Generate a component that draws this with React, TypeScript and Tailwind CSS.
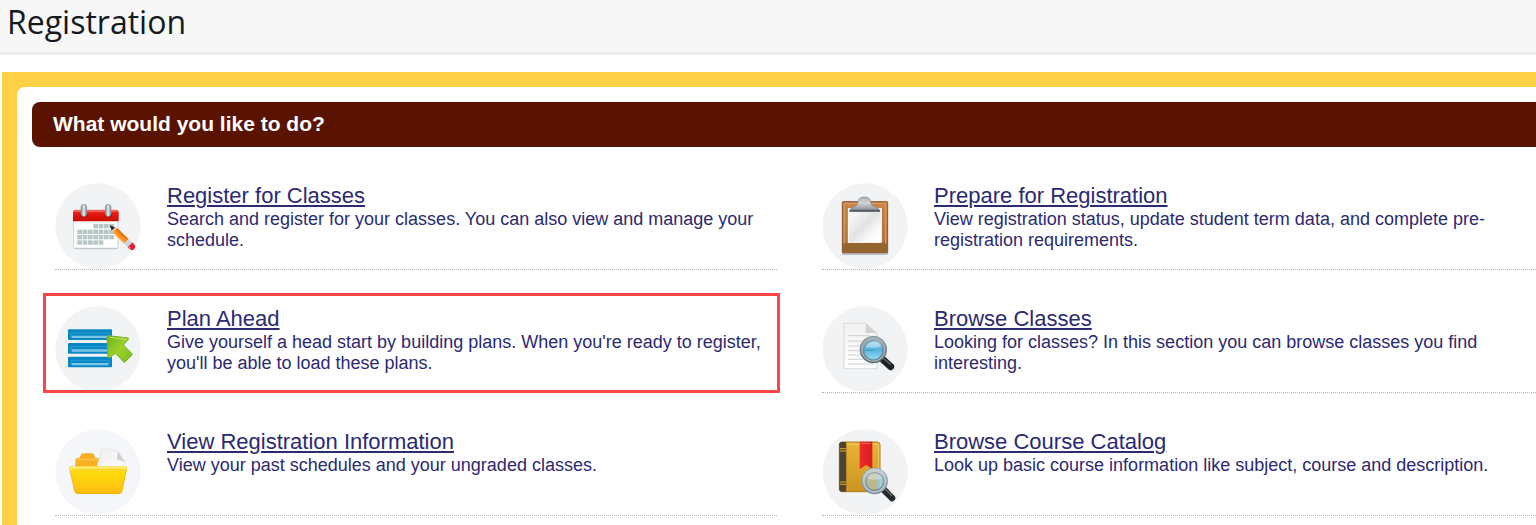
import type { ReactNode } from 'react';

function Badge({ fill = '#f2f3f5', children }: { fill?: string; children: ReactNode }) {
  return (
    <svg viewBox="30 24 258 258" className="size-[86px] shrink-0" aria-hidden="true">
      <circle cx="159" cy="153" r="128" fill={fill} />
      {children}
    </svg>
  );
}

const calendarCells = [
  { y: 147, from: 3, to: 6 },
  { y: 164, from: 0, to: 6 },
  { y: 180, from: 0, to: 6 },
  { y: 196, from: 0, to: 4 },
];

function CalendarIcon() {
  return (
    <Badge>
      <defs>
        <linearGradient id="cal-red" x1="0" y1="0" x2="0" y2="1">
          <stop offset="0" stopColor="#f0605a" />
          <stop offset="0.3" stopColor="#e8190f" />
          <stop offset="1" stopColor="#c90d06" />
        </linearGradient>
        <linearGradient id="cal-ring" x1="0" y1="0" x2="1" y2="0">
          <stop offset="0" stopColor="#71858e" />
          <stop offset="0.5" stopColor="#e6eef1" />
          <stop offset="1" stopColor="#71858e" />
        </linearGradient>
        <linearGradient id="cal-pencil" x1="0" y1="0" x2="1" y2="0">
          <stop offset="0" stopColor="#ffb04e" />
          <stop offset="0.5" stopColor="#fb8c1d" />
          <stop offset="1" stopColor="#df6b08" />
        </linearGradient>
      </defs>
      <rect x="86" y="108" width="133" height="114" rx="7" fill="#fdfefe" stroke="#cfd6da" strokeWidth="3" />
      <path d="M88 220h129" stroke="#bac4c8" strokeWidth="3" />
      <path d="M84 139v-27q0-8 8-8h121q8 0 8 8v27z" fill="url(#cal-red)" />
      <path d="M90 108h125" stroke="#f47b74" strokeWidth="3" />
      {[108, 181].map((x) => (
        <g key={x}>
          <ellipse cx={x + 9} cy="121" rx="11" ry="6" fill="#8d1512" />
          <rect x={x} y="88" width="17" height="36" rx="8" fill="url(#cal-ring)" stroke="#8b9ba2" strokeWidth="2" />
        </g>
      ))}
      {calendarCells.map((row) =>
        Array.from({ length: row.to - row.from + 1 }, (_, i) => (
          <rect key={`${row.y}-${i}`} x={97 + (row.from + i) * 16} y={row.y} width="14" height="13" fill="#b6c5c5" />
        )),
      )}
      <g transform="translate(194 151) rotate(-46) scale(1.1)">
        <path d="M0 0l-9 22h18z" fill="#f0c69a" />
        <path d="M0 0l-6 14h12z" fill="#20262a" />
        <path d="M-9 21q4-4 9 0q5-4 9 0v42h-18z" fill="url(#cal-pencil)" />
        <path d="M-9 63h18v15h-18z" fill="#cbd5dc" />
        <path d="M-9 77h18v7q0 9-9 9t-9-9z" fill="#df2035" />
        <path d="M-6 79v6" stroke="#f57d86" strokeWidth="4" />
      </g>
    </Badge>
  );
}

function ClipboardIcon() {
  return (
    <Badge>
      <defs>
        <linearGradient id="clip-wood" x1="0" y1="0" x2="0" y2="1">
          <stop offset="0" stopColor="#c98446" />
          <stop offset="0.8" stopColor="#b8743a" />
          <stop offset="0.82" stopColor="#96652f" />
          <stop offset="1" stopColor="#a66e3b" />
        </linearGradient>
        <linearGradient id="clip-paper" x1="0" y1="0" x2="1" y2="1">
          <stop offset="0" stopColor="#ffffff" />
          <stop offset="0.5" stopColor="#e2e3e5" />
          <stop offset="0.75" stopColor="#fafafa" />
          <stop offset="1" stopColor="#ffffff" />
        </linearGradient>
        <linearGradient id="clip-metal" x1="0" y1="0" x2="0" y2="1">
          <stop offset="0" stopColor="#a4a7ac" />
          <stop offset="0.4" stopColor="#d2d5d9" />
          <stop offset="0.8" stopColor="#9da2a9" />
          <stop offset="1" stopColor="#565c66" />
        </linearGradient>
      </defs>
      <rect x="90" y="228" width="138" height="11" rx="3" fill="#85888b" opacity="0.65" />
      <rect x="91" y="80" width="136" height="152" rx="2" fill="url(#clip-wood)" stroke="#8d552b" strokeWidth="3" />
      <path d="M97 226V86h124v140" fill="none" stroke="#d99d68" strokeWidth="3" />
      <path d="M93 206h132v24H93z" fill="#94652f" />
      <rect x="107" y="99" width="104" height="106" fill="#9a673c" />
      <rect x="109" y="101" width="99" height="101" fill="url(#clip-paper)" stroke="#fff" strokeWidth="3" />
      <path
        d="M113 109q0-9 10-12q14-3 15-16q1-15 19-15t19 15q1 13 16 16q11 3 11 12z"
        fill="url(#clip-metal)"
        stroke="#8c9097"
        strokeWidth="2"
      />
      <path d="M113 108h91" stroke="#4c525b" strokeWidth="4" />
      <ellipse cx="157" cy="76" rx="11" ry="5" fill="#c4c6c9" />
    </Badge>
  );
}

function PlanIcon() {
  return (
    <Badge>
      <defs>
        <linearGradient id="plan-green" x1="0" y1="0" x2="1" y2="1">
          <stop offset="0" stopColor="#6fae17" />
          <stop offset="0.5" stopColor="#9bd32c" />
          <stop offset="1" stopColor="#79b81b" />
        </linearGradient>
      </defs>
      {[94, 135, 176].map((y) => (
        <g key={y}>
          <rect x="69" y={y} width="132" height="32" rx="3" fill="#0787c4" />
          <path d={`M78 ${y + 24}v-13h115v13`} fill="none" stroke="#2a9dd2" strokeWidth="3" />
          <rect x="80" y={y + 19} width="110" height="7" rx="1" fill="#7cc6e6" />
        </g>
      ))}
      <path
        d="M190 113l59 7q4 1 1 4l-13 15q-2 2 1 5l22 22q3 3 0 6l-19 19q-3 3-6 0l-21-23q-3-3-6 0l-13 10q-5 4-6-2l-3-57q0-6 4-6z"
        fill="url(#plan-green)"
        stroke="#76b023"
        strokeWidth="3"
        strokeLinejoin="round"
      />
      <path d="M193 118l51 6" stroke="#bce368" strokeWidth="3" fill="none" />
    </Badge>
  );
}

function PageSearchIcon() {
  return (
    <Badge>
      <defs>
        <linearGradient id="page-fill" x1="0" y1="0" x2="0" y2="1">
          <stop offset="0" stopColor="#f1f1f1" />
          <stop offset="1" stopColor="#ffffff" />
        </linearGradient>
        <linearGradient id="page-ring" x1="0" y1="0" x2="0" y2="1">
          <stop offset="0" stopColor="#aab7bb" />
          <stop offset="1" stopColor="#536872" />
        </linearGradient>
        <linearGradient id="page-glass" x1="0" y1="0" x2="0" y2="1">
          <stop offset="0" stopColor="#a6d8ec" />
          <stop offset="0.45" stopColor="#55b3db" />
          <stop offset="1" stopColor="#94dcf3" />
        </linearGradient>
      </defs>
      <path d="M96 76h65l34 33v103H96z" fill="url(#page-fill)" stroke="#dddedf" strokeWidth="4" strokeLinejoin="round" />
      <path d="M161 76v29h33z" fill="#d0d1d2" />
      {[113, 129, 144, 158, 171, 184, 198].map((y) => (
        <path key={y} d={`M108 ${y}h${y === 198 ? 76 : 64}`} stroke="#cfd0d1" strokeWidth="3" />
      ))}
      <path d="M211 183l25 23" stroke="#1f2224" strokeWidth="21" strokeLinecap="round" />
      <path d="M214 181l21 18" stroke="#62686b" strokeWidth="4" strokeLinecap="round" />
      <circle cx="184" cy="155" r="40" fill="url(#page-ring)" stroke="#596c74" strokeWidth="2" />
      <circle cx="184" cy="155" r="34" fill="none" stroke="#a1b2b9" strokeWidth="4" />
      <circle cx="184" cy="157" r="28" fill="url(#page-glass)" stroke="#5590a8" strokeWidth="2" />
      <path d="M160 157h25" stroke="#3799c5" strokeWidth="3" />
      <path d="M162 148q8-19 28-18q15 2 19 15q-18 7-47 3z" fill="#d6eef6" opacity="0.45" />
    </Badge>
  );
}

function FolderIcon() {
  return (
    <Badge fill="#f4f6f9">
      <defs>
        <linearGradient id="folder-front" x1="0" y1="0" x2="0" y2="1">
          <stop offset="0" stopColor="#ffd43b" />
          <stop offset="0.25" stopColor="#ffda0b" />
          <stop offset="1" stopColor="#fdbd13" />
        </linearGradient>
        <linearGradient id="folder-paper" x1="0" y1="0" x2="1" y2="1">
          <stop offset="0" stopColor="#eeeeef" />
          <stop offset="1" stopColor="#fafafa" />
        </linearGradient>
      </defs>
      <path d="M91 140v-22q0-7 7-7h5l6-11q1-3 6-3h26q5 0 6 4l3 10h15v29z" fill="#f8b01f" />
      <path d="M94 116h66" stroke="#fac351" strokeWidth="4" />
      <path d="M156 137l14-52q2-6 8-5l40 11l22 29l-4 17z" fill="url(#folder-paper)" stroke="#dedfe0" strokeWidth="2" />
      <path d="M219 91l-4 24l24 8z" fill="#ced0d1" />
      <path
        d="M77 136h163q8 0 6 8l-14 67q-2 8-9 8H97q-7 0-9-8l-15-67q-2-8 4-8z"
        fill="url(#folder-front)"
      />
      <path d="M77 147q-1-7 6-7h152q8 0 6 7" fill="none" stroke="#ffed7c" strokeWidth="5" />
      <path d="M75 145l15 66q2 6 7 6h126q5 0 7-6l14-66" fill="none" stroke="#efab17" strokeWidth="2" />
    </Badge>
  );
}

function BookSearchIcon() {
  return (
    <Badge>
      <defs>
        <linearGradient id="book-cover" x1="0" y1="0" x2="0" y2="1">
          <stop offset="0" stopColor="#e7b634" />
          <stop offset="1" stopColor="#cc9420" />
        </linearGradient>
        <linearGradient id="book-ribbon" x1="0" y1="0" x2="1" y2="0">
          <stop offset="0" stopColor="#f02a28" />
          <stop offset="1" stopColor="#d91b20" />
        </linearGradient>
        <linearGradient id="book-ring" x1="0" y1="0" x2="0" y2="1">
          <stop offset="0" stopColor="#d4dadd" />
          <stop offset="1" stopColor="#71858d" />
        </linearGradient>
        <linearGradient id="book-glass" x1="0" y1="0" x2="1" y2="0">
          <stop offset="0" stopColor="#bab78f" />
          <stop offset="0.6" stopColor="#beb98a" />
          <stop offset="0.65" stopColor="#8ec2d4" />
          <stop offset="1" stopColor="#b9d6df" />
        </linearGradient>
      </defs>
      <rect x="82" y="63" width="122" height="149" rx="8" fill="url(#book-cover)" stroke="#ad7d1d" strokeWidth="3" />
      <path d="M103 70h94q3 0 3 5v102" fill="none" stroke="#f2ce61" strokeWidth="3" />
      <path d="M102 63v149H89q-7 0-7-7V70q0-7 7-7z" fill="#4c4430" />
      <path d="M84 83h18M84 90h18M84 183h18M84 190h18" stroke="#d9aa37" strokeWidth="3" />
      <path d="M103 64v147" stroke="#9d721b" strokeWidth="2" />
      <path d="M143 62h38v82l-18-12l-20 12z" fill="url(#book-ribbon)" />
      <path d="M147 68h29" stroke="#f36a63" strokeWidth="3" />
      <path d="M215 206l25 25" stroke="#26292b" strokeWidth="20" strokeLinecap="round" />
      <path d="M219 204l20 19" stroke="#686d70" strokeWidth="4" strokeLinecap="round" />
      <circle cx="188" cy="180" r="39" fill="url(#book-ring)" stroke="#81949d" strokeWidth="2" />
      <circle cx="188" cy="180" r="33" fill="none" stroke="#bdcbd1" strokeWidth="4" />
      <circle cx="188" cy="181" r="26" fill="url(#book-glass)" stroke="#7b949c" strokeWidth="3" />
      <path d="M165 173q6-16 22-16t24 16q-20 6-46 0z" fill="#e8f2f3" opacity="0.45" />
    </Badge>
  );
}

type Item = { title: string; text: string; icon: ReactNode; highlighted?: boolean };

const items: Item[] = [
  {
    title: 'Register for Classes',
    text: 'Search and register for your classes. You can also view and manage your schedule.',
    icon: <CalendarIcon />,
  },
  {
    title: 'Prepare for Registration',
    text: 'View registration status, update student term data, and complete pre-registration requirements.',
    icon: <ClipboardIcon />,
  },
  {
    title: 'Plan Ahead',
    text: "Give yourself a head start by building plans. When you're ready to register, you'll be able to load these plans.",
    icon: <PlanIcon />,
    highlighted: true,
  },
  {
    title: 'Browse Classes',
    text: 'Looking for classes? In this section you can browse classes you find interesting.',
    icon: <PageSearchIcon />,
  },
  {
    title: 'View Registration Information',
    text: 'View your past schedules and your ungraded classes.',
    icon: <FolderIcon />,
  },
  {
    title: 'Browse Course Catalog',
    text: 'Look up basic course information like subject, course and description.',
    icon: <BookSearchIcon />,
  },
];

export default function App() {
  return (
    <div className="min-h-screen overflow-hidden bg-white font-['Liberation_Sans',Arial,sans-serif]">
      <header className="border-b-3 border-[#ededed] bg-[#f7f7f7] px-[7px] pb-2">
        <h1 className="font-['Open_Sans',sans-serif] text-[32px] leading-[44px] font-medium text-[#151a1e]">
          Registration
        </h1>
      </header>
      <main className="mt-[17px] ml-[2px] bg-[#ffcf44] pt-[15px] pl-[15px]">
        <div className="min-h-[438px] rounded-tl-lg bg-white pt-[15px] pl-[15px]">
          <h2 className="rounded-l-lg bg-[#5a1300] pb-0.5 pl-[21px] text-[21px] leading-[43px] font-bold text-white">
            What would you like to do?
          </h2>
          <ul className="-mr-2 ml-[23px] grid grid-cols-2 gap-x-[45px]">
            {items.map((item) => (
              <li
                key={item.title}
                className="relative flex gap-[26px] border-b border-dotted border-[#b4b4b4] pt-9"
              >
                {item.icon}
                <div className="min-w-0 flex-1 text-[#2b2a72]">
                  <a
                    href="#"
                    className="block w-fit text-[22px] leading-[26px] underline decoration-2 underline-offset-2"
                  >
                    {item.title}
                  </a>
                  <p className="pr-3 text-[18px] leading-[21px]">{item.text}</p>
                </div>
                {item.highlighted && (
                  <div className="pointer-events-none absolute top-[23px] -right-[3px] -bottom-px -left-3 border-3 border-[#ff4545]" />
                )}
              </li>
            ))}
          </ul>
        </div>
      </main>
    </div>
  );
}
